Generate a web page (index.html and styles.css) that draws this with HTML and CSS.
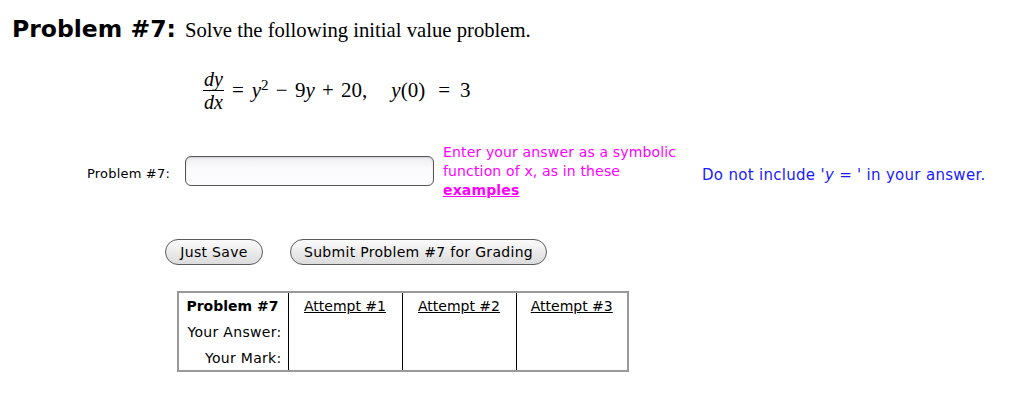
FILE: index.html
```html
<!DOCTYPE html>
<html>
<head>
<meta charset="utf-8">
<link rel="stylesheet" href="styles.css">
</head>
<body>
<div class="page">
  <h1 class="title"><span class="pnum">Problem #7:</span> <span class="prompt">Solve the following initial value problem.</span></h1>

  <div class="eq">
    <span class="frac"><span class="num">dy</span><span class="den">dx</span></span>
    <span class="op">=</span>
    <span class="expr"><i>y</i><sup>2</sup> − 9<i>y</i> + 20,</span>
    <span class="ic"><i>y</i>(0)</span>
    <span class="op2">=</span>
    <span class="val">3</span>
  </div>

  <div class="answer-row">
    <label class="alabel">Problem #7:</label>
    <input class="ainput" type="text">
    <div class="hint">Enter your answer as a symbolic<br>function of x, as in these<br><a class="ex" href="#">examples</a></div>
    <div class="note">Do not include '<i>y</i> = ' in your answer.</div>
  </div>

  <div class="buttons">
    <button class="btn save">Just Save</button>
    <button class="btn submit">Submit Problem #7 for Grading</button>
  </div>

  <table class="attempts">
    <colgroup>
      <col class="c0"><col class="c1"><col class="c2"><col class="c3">
    </colgroup>
    <tr class="r1">
      <th class="rowh">Problem #7</th>
      <td><u>Attempt #1</u></td>
      <td><u>Attempt #2</u></td>
      <td><u>Attempt #3</u></td>
    </tr>
    <tr class="r2">
      <th class="rowl">Your Answer:</th>
      <td></td><td></td><td></td>
    </tr>
    <tr class="r3">
      <th class="rowl">Your Mark:</th>
      <td></td><td></td><td></td>
    </tr>
  </table>
</div>
</body>
</html>
```

FILE: styles.css
```css
html, body {
  margin: 0;
  padding: 0;
  background: #ffffff;
}
body {
  font-family: "DejaVu Sans", Verdana, sans-serif;
  font-size: 13px;
  color: #000;
}
.page {
  padding: 14px 0 0 12px;
}
.title {
  margin: 0;
  font-weight: normal;
  display: flex;
  align-items: baseline;
  gap: 9px;
  line-height: 30px;
}
.pnum {
  font-family: "DejaVu Sans", Verdana, sans-serif;
  font-weight: bold;
  font-size: 23.5px;
}
.prompt {
  font-family: "Liberation Serif", "Times New Roman", serif;
  font-size: 20.7px;
}
.eq {
  margin: 22px 0 0 191px;
  display: flex;
  align-items: center;
  font-family: "Liberation Serif", "Times New Roman", serif;
  font-size: 21px;
  height: 46px;
}
.frac {
  display: inline-flex;
  flex-direction: column;
  align-items: center;
  font-style: italic;
  font-size: 20px;
  line-height: 20px;
}
.frac .num {
  border-bottom: 1px solid #000;
  padding: 0 1px 1px;
}
.frac .den {
  padding-top: 1px;
}
.op { margin: 0 8px 0 8px; }
.expr { word-spacing: 2px; }
.expr sup { font-size: 15px; vertical-align: 7px; line-height: 0; }
.ic { margin-left: 24px; }
.op2 { margin: 0 10px 0 13px; }

.answer-row {
  margin-top: 33px;
  display: flex;
  align-items: center;
  height: 50px;
}
.alabel {
  width: 173px;
  text-align: right;
  padding-right: 15px;
  padding-top: 4px;
  box-sizing: border-box;
  letter-spacing: 0.2px;
}
.ainput {
  width: 249px;
  height: 30px;
  box-sizing: border-box;
  border: 1px solid #555;
  border-radius: 6px;
  background: linear-gradient(#eeeef0, #fbfbfd 40%, #fcfcff);
  box-shadow: inset 0 1px 2px rgba(0,0,0,0.12);
  margin: 0;
}
.hint {
  margin-left: 9px;
  color: #ff00ff;
  font-size: 14px;
  letter-spacing: 0.15px;
  line-height: 19px;
  width: 259px;
}
.ex {
  color: #ff00ff;
  font-weight: bold;
}
.note {
  color: #1a1aff;
  font-size: 15px;
  letter-spacing: 0.3px;
  margin-left: 0;
  margin-top: 8px;
}
.buttons {
  margin-top: 43px;
  margin-left: 153px;
  display: flex;
  gap: 27px;
}
.btn {
  font-family: "DejaVu Sans", Verdana, sans-serif;
  font-size: 14px;
  letter-spacing: 0.3px;
  color: #000;
  height: 26px;
  padding: 0 10px;
  border: 1px solid #5a5a5a;
  border-radius: 13px;
  background: linear-gradient(#fbfbfb, #e8e8e8 60%, #dcdcdc);
}
.save { width: 98px; }
.submit { width: 257px; }

.attempts {
  margin-top: 26px;
  margin-left: 165px;
  border-collapse: collapse;
  border: 2px solid #999;
  table-layout: fixed;
  width: 452px;
  font-size: 14px;
}
.c0 { width: 110px; }
.c1, .c2 { width: 114px; }
.c3 { width: 112px; }
.attempts th, .attempts td {
  padding: 0;
  vertical-align: middle;
}
.r1 th, .r1 td { height: 25px; }
.r2 th, .r2 td { height: 27px; }
.r3 th, .r3 td { height: 25px; }
.attempts td {
  border-left: 1px solid #000;
  text-align: center;
}
.attempts th {
  text-align: right;
  font-weight: normal;
  padding-right: 6px;
  letter-spacing: 0.3px;
}
.attempts th.rowh {
  font-weight: bold;
  padding-right: 9px;
  letter-spacing: 0;
}
```
